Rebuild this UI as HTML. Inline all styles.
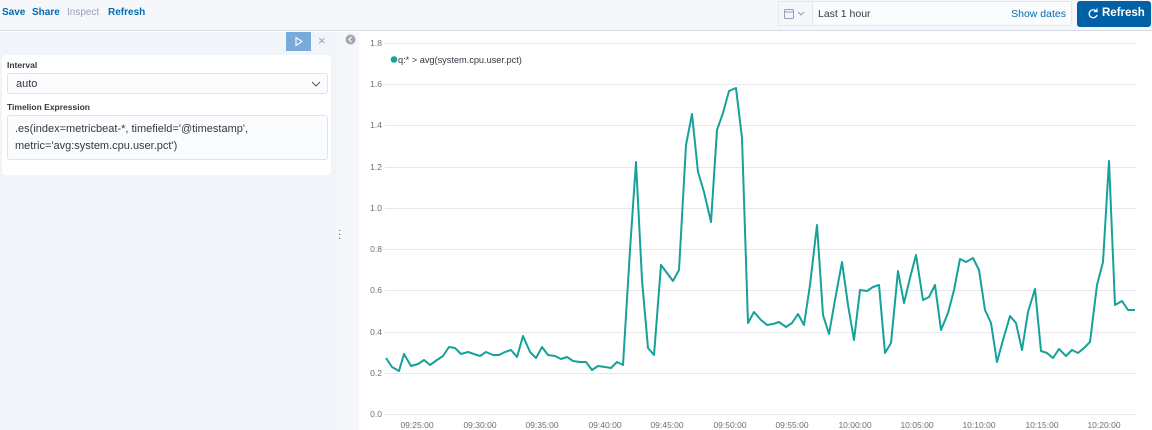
<!DOCTYPE html>
<html><head><meta charset="utf-8"><style>
*{box-sizing:border-box;margin:0;padding:0}
body{width:1152px;height:430px;overflow:hidden;background:#fff;font-family:"Liberation Sans",sans-serif;position:relative}
.top{position:absolute;left:0;top:0;width:1152px;height:31px;background:#f5f7fa;border-bottom:1px solid #d3dae6}
.top b{position:absolute;top:7px;font-size:10px;font-weight:bold;color:#006bb4}
.left{position:absolute;left:0;top:32px;width:336px;height:398px;background:#f1f4f9}
.strip{position:absolute;left:336px;top:32px;width:23px;height:398px;background:#f5f7fa}
.card{position:absolute;left:2px;top:55px;width:329px;height:120px;background:#fff;border-radius:4px}
.lbl{position:absolute;left:5px;font-size:8.5px;font-weight:bold;color:#343741}
.fld{position:absolute;left:5px;width:321px;background:#fbfcfd;border:1px solid #dfe3ea;border-radius:3px;font-size:11px;color:#343741}
</style></head><body>
<div class="top">
<b style="left:2px">Save</b><b style="left:32px">Share</b><b style="left:67px;color:#98a2b3;font-weight:normal">Inspect</b><b style="left:108px">Refresh</b>
<div style="position:absolute;left:778px;top:1px;width:34px;height:25px;background:#f5f7fa;border:1px solid #e3e7ee;border-right:none"></div>
<svg style="position:absolute;left:783px;top:7px" width="26" height="14"><rect x="1.5" y="2.5" width="9" height="9" rx="1" fill="none" stroke="#8fa0b8"/><line x1="1.5" y1="5" x2="10.5" y2="5" stroke="#8fa0b8"/><path d="M15 5l3 3 3-3" fill="none" stroke="#8fa0b8"/></svg>
<div style="position:absolute;left:812px;top:1px;width:260px;height:25px;background:#fbfcfd;border:1px solid #e3e7ee;font-size:10.5px;color:#343741;padding:6px 0 0 5px">Last 1 hour<span style="position:absolute;right:5px;top:6px;color:#006bb4">Show dates</span></div>
<div style="position:absolute;left:1077px;top:1px;width:74px;height:26px;background:#0061a6;border-radius:3px;color:#fff;font-size:11.5px;font-weight:bold;padding:6px 0 0 25px">Refresh</div>
<svg style="position:absolute;left:1087px;top:8px" width="12" height="12"><path d="M9.5 3.5A4 4 0 1 0 10 7" fill="none" stroke="#fff" stroke-width="1.3"/><path d="M7 3.5h3V0.5" fill="none" stroke="#fff" stroke-width="1.2"/></svg>
</div>
<div class="left"></div><div class="strip"></div>
<div style="position:absolute;left:286px;top:32px;width:25px;height:19px;background:#79aad9"></div>
<svg style="position:absolute;left:292px;top:35px" width="14" height="13"><path d="M4 2.5v8l6-4z" fill="none" stroke="#fff" stroke-width="1.1"/></svg>
<div style="position:absolute;left:318px;top:33px;font-size:13px;color:#98a2b3">×</div>
<svg style="position:absolute;left:345px;top:34px" width="11" height="11"><circle cx="5.5" cy="5.5" r="5" fill="#a0a8b4"/><path d="M6.5 3l-2.5 2.5 2.5 2.5" fill="none" stroke="#fff" stroke-width="1.2"/></svg>
<div style="position:absolute;left:338px;top:229px;font-size:10px;color:#555;line-height:4px">·<br>·<br>·</div>
<div class="card">
<div class="lbl" style="top:5px">Interval</div>
<div class="fld" style="top:18px;height:21px;padding:4px 0 0 8px">auto
<svg style="position:absolute;right:6px;top:6px" width="10" height="8"><path d="M1 2l4 4 4-4" fill="none" stroke="#555" stroke-width="1"/></svg></div>
<div class="lbl" style="top:47px">Timelion Expression</div>
<div class="fld" style="top:60px;height:45px;padding:5px 0 0 7px;line-height:17px">.es(index=metricbeat-*, timefield='@timestamp',<br>metric='avg:system.cpu.user.pct')</div>
</div>
<svg style="position:absolute;left:0;top:0" width="1152" height="430" font-family="Liberation Sans, sans-serif">
<g stroke="#e6e8ec" stroke-width="1">
<line x1="385" y1="43.5" x2="1136" y2="43.5"/><line x1="385" y1="84.5" x2="1136" y2="84.5"/><line x1="385" y1="125.5" x2="1136" y2="125.5"/><line x1="385" y1="167.5" x2="1136" y2="167.5"/><line x1="385" y1="208.5" x2="1136" y2="208.5"/><line x1="385" y1="249.5" x2="1136" y2="249.5"/><line x1="385" y1="290.5" x2="1136" y2="290.5"/><line x1="385" y1="332.5" x2="1136" y2="332.5"/><line x1="385" y1="373.5" x2="1136" y2="373.5"/><line x1="385" y1="414.5" x2="1136" y2="414.5"/>
</g>
<g font-size="8.5" fill="#69707d" text-anchor="end">
<text x="382" y="46">1.8</text><text x="382" y="87">1.6</text><text x="382" y="128">1.4</text><text x="382" y="170">1.2</text><text x="382" y="211">1.0</text><text x="382" y="252">0.8</text><text x="382" y="293">0.6</text><text x="382" y="335">0.4</text><text x="382" y="376">0.2</text><text x="382" y="417">0.0</text>
</g>
<g font-size="8.5" fill="#69707d" text-anchor="middle">
<text x="417" y="428">09:25:00</text><text x="480" y="428">09:30:00</text><text x="542" y="428">09:35:00</text><text x="605" y="428">09:40:00</text><text x="667" y="428">09:45:00</text><text x="730" y="428">09:50:00</text><text x="792" y="428">09:55:00</text><text x="855" y="428">10:00:00</text><text x="917" y="428">10:05:00</text><text x="979" y="428">10:10:00</text><text x="1042" y="428">10:15:00</text><text x="1104" y="428">10:20:00</text>
</g>
<circle cx="394" cy="59.5" r="3.3" fill="#16a19a"/>
<text x="398" y="63" font-size="9.2" fill="#343741">q:* &gt; avg(system.cpu.user.pct)</text>
<polyline fill="none" stroke="#16a19a" stroke-width="2" stroke-linejoin="round" points="386,358 392,367 399,371 404,354 411,366 418,364 424,360 430,365 437,360 443,356 449,347 455,348 461,354 468,352 474,354 480,356 486,352 493,355 499,355 505,352 511,350 517,357 523,336 530,352 536,358 542,347 548,355 555,356 561,359 567,357 573,361 580,362 586,362 592,370 598,366 605,367 611,368 617,362 623,365 630,250 636,162 642,280 648,348 654,355 661,265 667,273 673,281 679,270 686,145 692,114 698,172 704,192 711,222 717,130 723,113 729,91 736,88 742,138 748,323 754,312 761,320 767,325 773,324 779,322 786,327 792,323 798,314 804,325 810,285 817,225 823,315 829,334 835,300 842,262 848,305 854,340 860,290 867,291 873,287 879,285 885,353 891,343 898,271 904,303 910,278 916,255 923,300 929,297 935,285 941,330 948,313 954,290 960,259 966,262 973,258 979,270 985,310 991,323 997,362 1003,340 1010,316 1016,323 1022,350 1028,312 1035,289 1041,351 1047,353 1053,358 1059,349 1066,356 1072,350 1078,353 1084,348 1090,342 1097,285 1103,262 1109,161 1115,305 1122,301 1128,310 1135,310"/>
</svg>
</body></html>
